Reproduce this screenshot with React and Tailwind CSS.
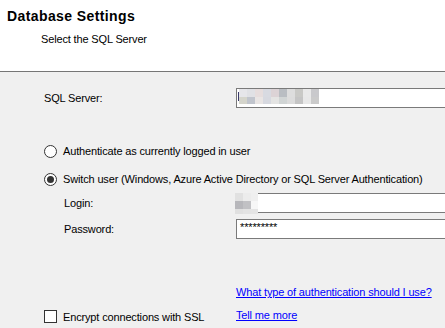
const FONT = { fontFamily: '"Liberation Sans", Arial, sans-serif' };

const serverBlur = [
  ['#e6e6ea', '#e0e1e5', '#e6dddd', '#d8dae1', '#dcd3d6', '#b9bdc2', '#dddddd', '#c9c9c6', '#e9e9e9', '#c9c9cc'],
  ['#d5d5cc', '#c1c5cd', '#e9e5e4', '#d7d9e0', '#e4e4e3', '#d1d5d5', '#dcdcdc', '#c5c5c5', '#e8e8e8', '#cbcbcb'],
];

const loginBlur = [
  ['#e1e1e1', '#ececec', '#efefef'],
  ['#b7b7bb', '#c1c1c4', '#f7f7f7'],
  ['#e0e0e0', '#e3e3e3', '#e4e4e4'],
];

function Radio({ checked }) {
  return (
    <div className="w-[13px] h-[13px] rounded-full border border-[#333333] bg-white flex items-center justify-center shrink-0">
      {checked && <div className="w-[7px] h-[7px] rounded-full bg-[#333333]" />}
    </div>
  );
}

export default function App() {
  return (
    <div className="w-[445px] h-[328px] overflow-hidden bg-[#f0f0f0] text-black text-[11px] leading-[13px] tracking-[-0.15px]" style={FONT}>
      {/* Header */}
      <div className="h-[72px] bg-white border-b border-[#767676] pt-[8px]">
        <div className="pl-[7px] text-[14px] leading-[16px] font-bold tracking-[0.4px]">Database Settings</div>
        <div className="pl-[41px] mt-[9px]">Select the SQL Server</div>
      </div>

      <div className="pl-[44px]">
        {/* SQL Server */}
        <div className="mt-[16px] flex items-center h-[20px]">
          <div className="w-[192px]">SQL Server:</div>
          <div className="relative flex-1 h-[20px] bg-white border border-[#7a7a7a] border-r-0">
            <div className="absolute left-[1px] top-[3px] w-[1px] h-[9px] bg-[#3a3a6a]" />
            <div className="absolute left-[2px] top-0 flex flex-col">
              {serverBlur.map((row, i) => (
                <div key={i} className={`flex ${i === 0 ? 'h-[8px]' : 'h-[7px]'}`}>
                  {row.map((c, j) => (
                    <div key={j} className="w-[8px] h-full" style={{ backgroundColor: c }} />
                  ))}
                </div>
              ))}
            </div>
          </div>
        </div>

        {/* Auth options */}
        <div className="mt-[37px] flex items-center h-[13px] gap-[6px]">
          <Radio />
          <span>Authenticate as currently logged in user</span>
        </div>
        <div className="mt-[15px] flex items-center h-[13px] gap-[6px]">
          <Radio checked />
          <span>Switch user (Windows, Azure Active Directory or SQL Server Authentication)</span>
        </div>

        {/* Login */}
        <div className="mt-[7px] flex items-center h-[20px]">
          <div className="w-[192px] pl-[20px]">Login:</div>
          <div className="relative flex-1 h-[20px] bg-white border border-[#7a7a7a] border-r-0">
            <div className="absolute -left-[2px] -top-[1px] flex flex-col">
              {loginBlur.map((row, i) => (
                <div key={i} className={`flex ${i === 2 ? 'h-[5px]' : 'h-[8px]'}`}>
                  {row.map((c, j) => (
                    <div key={j} className={`${j === 2 ? 'w-[7px]' : 'w-[8px]'} h-full`} style={{ backgroundColor: c }} />
                  ))}
                </div>
              ))}
            </div>
          </div>
        </div>

        {/* Password */}
        <div className="mt-[6px] flex items-center h-[20px]">
          <div className="w-[192px] pl-[20px]">Password:</div>
          <div className="flex-1 h-[20px] bg-white border border-[#7a7a7a] border-r-0 pl-[3px] pt-[1px]">
            *********
          </div>
        </div>

        {/* Links */}
        <div className="mt-[47px] pl-[192px]">
          <a className="text-[#0000ff] underline" href="#">What type of authentication should I use?</a>
        </div>
        <div className="mt-[10px] flex items-start h-[13px]">
          <div className="w-[192px] flex items-center gap-[6px]">
            <div className="w-[13px] h-[13px] border border-[#333333] bg-white shrink-0" />
            <span className="mt-[2px]">Encrypt connections with SSL</span>
          </div>
          <a className="text-[#0000ff] underline" href="#">Tell me more</a>
        </div>
      </div>
    </div>
  );
}
